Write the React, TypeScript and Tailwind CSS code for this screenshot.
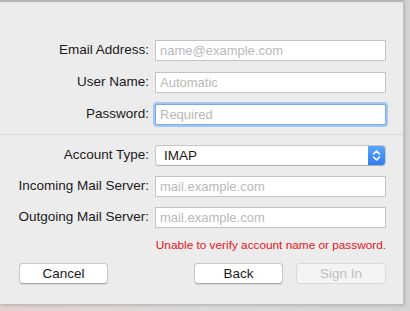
import { ReactNode } from "react";

const font = { fontFamily: '"Liberation Sans", Arial, sans-serif' };

// One labelled row: right-aligned label, then the control.
function Row({ label, children }: { label: string; children: ReactNode }) {
  return (
    <div className="flex items-center">
      <label className="w-[150px] shrink-0 text-right text-[13.5px] text-[#1a1a1a] pr-[1px]">
        {label}
      </label>
      <div className="ml-[5px] w-[231px]">{children}</div>
    </div>
  );
}

function Field({ placeholder, focused = false }: { placeholder: string; focused?: boolean }) {
  return (
    <input
      readOnly
      placeholder={placeholder}
      className={`block w-full h-[21px] bg-white pl-[4px] text-[13px] outline-none placeholder:text-[#b9b9b9] border ${
        focused
          ? "border-[#7ea9e6] shadow-[0_0_0_2px_#a5c6f2] rounded-[2px]"
          : "border-[#c3c3c3]"
      }`}
      style={font}
    />
  );
}

function Button({ children, disabled = false, className = "" }: { children: ReactNode; disabled?: boolean; className?: string }) {
  return (
    <button
      className={`h-[21px] rounded-[4px] text-[13.5px] leading-none border ${
        disabled
          ? "bg-[#f4f4f4] border-[#d9d9d9] text-[#bdbdbd]"
          : "bg-white border-[#c8c8c8] border-b-[#ababab] text-[#1a1a1a] shadow-[0_0.5px_1px_rgba(0,0,0,0.1)]"
      } ${className}`}
      style={font}
    >
      {children}
    </button>
  );
}

export default function App() {
  return (
    <div
      className="w-[410px] h-[311px] overflow-hidden bg-gradient-to-r from-[#e6d2cf] via-[#dcdcdc] to-[#d4d4d4]"
      style={font}
    >
      <div className="w-[404px] h-[305px] bg-[#ececec] border-t-2 border-t-[#b4b4b4] border-r border-r-[#c0c0c0] border-b border-b-[#bdbdbd] shadow-[1px_1px_3px_rgba(0,0,0,0.15)]">
        <div className="flex flex-col gap-[11px] pt-[38px]">
          <Row label="Email Address:">
            <Field placeholder="name@example.com" />
          </Row>
          <Row label="User Name:">
            <Field placeholder="Automatic" />
          </Row>
          <Row label="Password:">
            <Field placeholder="Required" focused />
          </Row>
        </div>

        <div className="mt-[9px] h-px bg-[#d6d6d6]" />

        <div className="flex flex-col gap-[10px] pt-[10px]">
          <Row label="Account Type:">
            <div className="flex h-[21px] rounded-[4px] bg-white border border-[#c6c6c6] border-b-[#aeaeae] overflow-hidden">
              <span className="flex-1 pl-[8px] text-[13.5px] leading-[19px] text-[#1a1a1a]">IMAP</span>
              <span className="w-[17px] flex items-center justify-center bg-gradient-to-b from-[#5aa6fb] to-[#2f7cf6]">
                <svg width="9" height="13" viewBox="0 0 9 13" fill="none" stroke="white" strokeWidth="1.6" strokeLinecap="round" strokeLinejoin="round">
                  <path d="M1.5 5 L4.5 2 L7.5 5" />
                  <path d="M1.5 8 L4.5 11 L7.5 8" />
                </svg>
              </span>
            </div>
          </Row>
          <Row label="Incoming Mail Server:">
            <Field placeholder="mail.example.com" />
          </Row>
          <Row label="Outgoing Mail Server:">
            <Field placeholder="mail.example.com" />
          </Row>
        </div>

        <p className="mt-[9px] w-[386px] text-right text-[11.8px] leading-[16px] text-[#e4151c]">
          Unable to verify account name or password.
        </p>

        <div className="mt-[10px] flex pl-[19px]">
          <Button className="w-[89px]">Cancel</Button>
          <Button className="w-[89px] ml-[86px]">Back</Button>
          <Button className="w-[90px] ml-[13px]" disabled>
            Sign In
          </Button>
        </div>
      </div>
    </div>
  );
}
